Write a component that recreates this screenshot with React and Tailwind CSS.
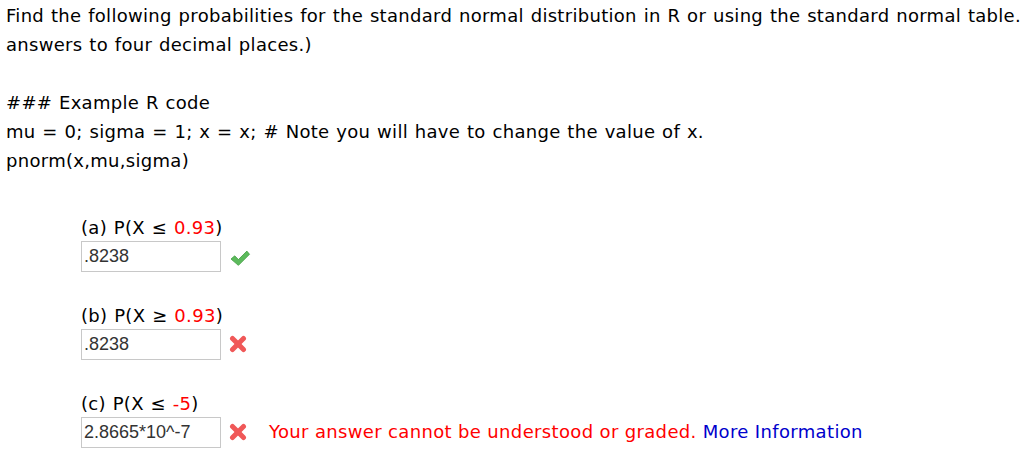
import React from "react";

function Check() {
  return (
    <svg width="22" height="19" viewBox="0 0 20 18" className="ml-[8px] mt-[8px]">
      <path
        d="M1.5 9.5 L5 6.5 L8.5 10 L16.5 2 L19 5 L8.5 15.5 Z"
        fill="#5cba5c"
        stroke="#45a045"
        strokeWidth="0.8"
        strokeLinejoin="round"
      />
    </svg>
  );
}

function Cross() {
  return (
    <svg width="18" height="18" viewBox="0 0 18 18" className="ml-[8px] mt-[6px]">
      <g stroke="#f05858" strokeWidth="5" strokeLinecap="round">
        <line x1="3.5" y1="3.5" x2="14.5" y2="14.5" />
        <line x1="14.5" y1="3.5" x2="3.5" y2="14.5" />
      </g>
    </svg>
  );
}

const boxCls =
  "w-[140px] h-[31px] border border-[#c8c8c8] pl-[2px] flex items-center text-[18px] text-[#333] font-['Liberation_Sans',Arial,sans-serif]";

const textCls = "text-[18px] leading-[26px] tracking-[0.3px] [word-spacing:0.8px]";

function Part({ label, rel, value, correct, children }) {
  return (
    <div className="mb-[31px]">
      <div className={textCls}>
        ({label}) P(X {rel} <span className="text-[#ff0000]">{value}</span>)
      </div>
      <div className="flex items-start">
        <div className={boxCls}>{children}</div>
        {correct ? <Check /> : <Cross />}
      </div>
    </div>
  );
}

export default function App() {
  return (
    <div className="w-[1024px] h-[475px] bg-white text-black font-['DejaVu_Sans',Verdana,sans-serif] overflow-hidden pt-[1px]">
      <div className="pl-[6px] text-[18px] leading-[29px] tracking-[0.3px] [word-spacing:0.8px] whitespace-nowrap">
        <div>Find the following probabilities for the standard normal distribution in R or using the standard normal table.</div>
        <div>answers to four decimal places.)</div>
        <div className="h-[29px]"></div>
        <div>### Example R code</div>
        <div>mu = 0; sigma = 1; x = x; # Note you will have to change the value of x.</div>
        <div>pnorm(x,mu,sigma)</div>
      </div>
      <div className="mt-[40px] ml-[81px]">
        <Part label="a" rel="≤" value="0.93" correct>.8238</Part>
        <Part label="b" rel="≥" value="0.93">.8238</Part>
        <div>
          <div className={textCls}>
            (c) P(X ≤ <span className="text-[#ff0000]">-5</span>)
          </div>
          <div className="flex items-start">
            <div className={boxCls}>2.8665*10^-7</div>
            <Cross />
            <div className="ml-[22px] mt-[2px] text-[18px] leading-[26px] tracking-[0.35px] text-[#ff0000] whitespace-nowrap">
              Your answer cannot be understood or graded.{" "}
              <span className="text-[#0000cc]">More Information</span>
            </div>
          </div>
        </div>
      </div>
    </div>
  );
}
